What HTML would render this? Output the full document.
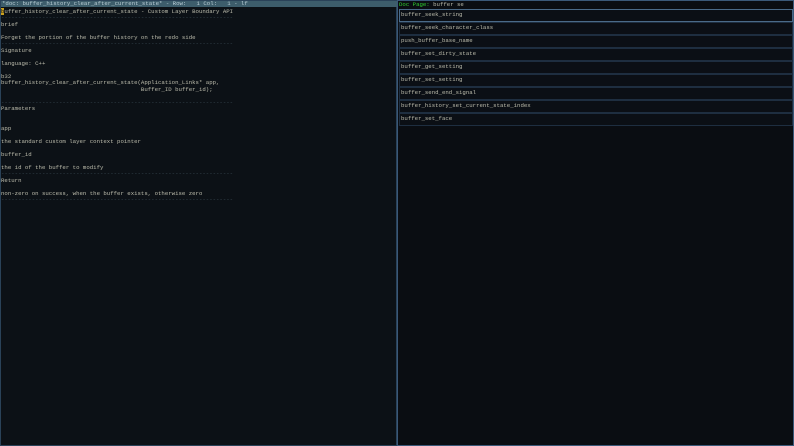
<!DOCTYPE html><html><head><style>
*{margin:0;padding:0}
body{width:794px;height:446px;background:#0c1116;position:relative;overflow:hidden;font-family:"Liberation Mono",monospace;font-size:5.7px;color:#bcbcac}
.l{position:absolute;left:1px;white-space:pre;line-height:6.5px}
.d{color:#3a4a55}
#lp{position:absolute;left:0;top:0;width:395px;height:444px;border:1px solid #2a4258}
#hdr{position:absolute;left:1px;top:1px;width:395px;height:6px;background:#3d5d6b;color:#b8ccd4;line-height:6.5px;white-space:pre;padding-left:1px}
#rp{position:absolute;left:397px;top:0;width:395px;height:444px;border:1px solid #3a5878;background:#0a0d12}
.it{position:absolute;left:1px;width:391px;height:11px;border:1px solid #1e2e40;background:#0b0f15;line-height:10px;padding-left:1px;white-space:pre}
</style></head><body>
<div id="lp"></div>
<div id="hdr">*doc: buffer_history_clear_after_current_state* - Row:   1 Col:   1 - lf</div>
<div class="l" style="top:8.5px"><span style="background:#c9a020;color:#111">b</span>uffer_history_clear_after_current_state - Custom Layer Boundary API
<span class="d">--------------------------------------------------------------------</span>
brief

Forget the portion of the buffer history on the redo side
<span class="d">--------------------------------------------------------------------</span>
Signature

language: C++

b32
buffer_history_clear_after_current_state(Application_Links* app,
                                         Buffer_ID buffer_id);

<span class="d">--------------------------------------------------------------------</span>
Parameters


app

the standard custom layer context pointer

buffer_id

the id of the buffer to modify
<span class="d">--------------------------------------------------------------------</span>
Return

non-zero on success, when the buffer exists, otherwise zero
<span class="d">--------------------------------------------------------------------</span></div>
<div id="rp">
<div style="position:absolute;left:1px;top:1px;line-height:6.5px;white-space:pre"><span style="color:#30d030">Doc Page:</span> buffer se</div>
<div class="it" style="top:8px;border-color:#4a6a88">buffer_seek_string</div>
<div class="it" style="top:21px">buffer_seek_character_class</div>
<div class="it" style="top:34px">push_buffer_base_name</div>
<div class="it" style="top:47px">buffer_set_dirty_state</div>
<div class="it" style="top:60px">buffer_get_setting</div>
<div class="it" style="top:73px">buffer_set_setting</div>
<div class="it" style="top:86px">buffer_send_end_signal</div>
<div class="it" style="top:99px">buffer_history_set_current_state_index</div>
<div class="it" style="top:112px">buffer_set_face</div>
</div>
</body></html>
